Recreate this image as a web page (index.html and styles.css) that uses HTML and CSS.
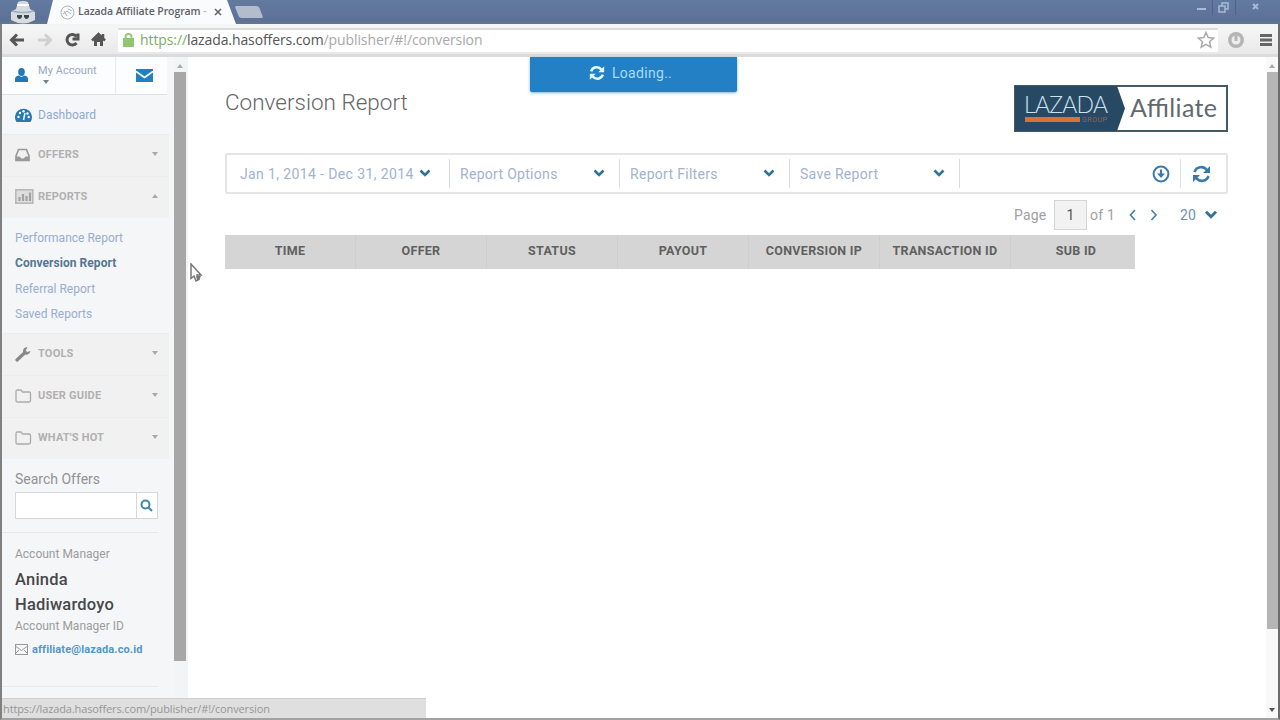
FILE: index.html
```html
<!DOCTYPE html>
<html lang="en">
<head>
    <meta charset="utf-8">
    <title>Lazada Affiliate Program</title>
    <link rel="stylesheet" href="styles.css">
</head>
<body>
<div class="window">
    <div class="tabstrip">
        <svg class="incognito" width="32" height="24" viewBox="0 0 32 24">
            <path d="M9 9L11 2Q16 0 21 2L23 9L28 12L28 20Q16 27 4 20L4 12Z" fill="#d5dbe1"/>
            <path d="M5 11Q16 14 27 11" stroke="#a5afbb" stroke-width="1.500" fill="none"/>
            <path d="M10 15h5v2q-1 2-2.500 2t-2.500-2zM17 15h5v2q-1 2-2.500 2t-2.500-2z" fill="#3e454d"/>
            <path d="M10 5h12" stroke="#fff" stroke-width="2"/>
        </svg>
        <div class="tab">
            <svg width="15" height="15" viewBox="0 0 15 15" fill="none" stroke="#b0b3b6">
                <circle cx="7.5" cy="7.5" r="6.5"/><path d="M3 9l4-3 4 3M8 4l4 2M4 6l3 5"/>
            </svg>
            <span class="tab-title">Lazada Affiliate Program <i>-</i></span>
            <svg class="tab-close" width="8" height="8" viewBox="0 0 8 8" stroke="#666" stroke-width="1.6"><path d="M1 1l6 6M7 1l-6 6"/></svg>
        </div>
        <div class="newtab"></div>
        <div class="controls">
            <svg width="76" height="22" viewBox="0 0 76 22" fill="none" stroke="#a9bad6" stroke-width="2">
                <path d="M5 12h9"/><path d="M27 9h6v6h-6zM30 9V6h6v6h-3" stroke-width="1.5"/><path d="M61 7l5 5M66 7l-5 5"/>
                <path d="M20.500 0v18M43.500 0v18" stroke="#4c628a" stroke-width="1"/>
            </svg>
        </div>
    </div>
    <div class="navbar">
        <svg class="nav-icons" width="118" height="26" viewBox="0 0 118 26" fill="none" stroke="#555" stroke-width="3">
            <path d="M22 13H10M15 7.500L9.500 13L15 18.500"/>
            <path d="M36 13h12M43 7.500L48.500 13L43 18.500" stroke="#d0d0d0"/>
            <path d="M74.500 9.500A5.300 5.300 0 1 0 74.500 16M76 6.500v5.500h-5.500"/>
            <path d="M90 13.500L96.500 7L103 13.500M101 7v4" stroke-width="2.500"/>
            <path d="M92 12.500l4.500-4 4.500 4V19h-3v-4h-3v4h-3z" fill="#555" stroke="none"/>
        </svg>
        <div class="address">
            <svg width="11" height="14" viewBox="0 0 11 14"><path d="M2.500 6V4a3 3 0 0 1 6 0v2" fill="none" stroke="#9ac67c" stroke-width="2"/><rect y="5" width="11" height="9" fill="#91c670"/></svg>
            <span class="url"><b>https://</b><em>lazada.hasoffers.com</em>/publisher/#!/conversion</span>
            <svg class="star" width="18" height="18" viewBox="0 0 18 18" fill="#fff" stroke="#aaa" stroke-width="1.500"><path d="M9 1.500l2.200 5.100 5.500.5-4.200 3.600 1.300 5.500L9 13.300l-4.800 2.900 1.300-5.500-4.200-3.600 5.500-.5z"/></svg>
        </div>
        <svg class="ext" width="18" height="18" viewBox="0 0 18 18"><circle cx="9" cy="9" r="8" fill="#b5b5b5"/><circle cx="9" cy="9" r="4.500" fill="#eee"/><path d="M9 3v7" stroke="#b5b5b5" stroke-width="3"/></svg>
        <svg class="menu" width="12" height="14" viewBox="0 0 12 14" stroke="#666" stroke-width="2.800"><path d="M0 2.500h12M0 7h12M0 11.500h12"/></svg>
    </div>
    <div class="page">
        <div class="sidebar">
            <div class="account">
                <div class="account-link">
                    <svg width="13" height="16" viewBox="0 0 13 16" fill="#2278b8"><ellipse cx="6.500" cy="5" rx="3.300" ry="4"/><path d="M0 15V12q0-3 3.500-3.500l3 1.500 3-1.500Q13 9 13 12v3z"/></svg>
                    <div><span class="my-account">My Account</span><i class="caret"></i></div>
                </div>
                <div class="mail">
                    <svg width="17" height="13" viewBox="0 0 17 13"><rect width="17" height="13" fill="#2180c0"/><path d="M0 2.500L8.500 8.500L17 2.500" fill="none" stroke="#fff" stroke-width="1.600"/></svg>
                </div>
            </div>
            <a class="dashboard">
                <svg width="17" height="14" viewBox="0 0 17 14"><path d="M1.500 14A8.500 8.500 0 1 1 15.500 14z" fill="#2679b2"/><path d="M8.500 12L10 5" stroke="#fff" stroke-width="1.500"/><g fill="#fff"><circle cx="3.500" cy="9" r="1.200"/><circle cx="5" cy="5" r="1.200"/><circle cx="8.500" cy="3.300" r="1.200"/><circle cx="12.500" cy="5.500" r="1.200"/><circle cx="13.700" cy="9" r="1.200"/></g></svg>
                <span>Dashboard</span>
            </a>
            <div class="group">
                <svg width="17" height="14" viewBox="0 0 17 14" fill="none" stroke="#999" stroke-width="1.600"><path d="M1 8L3.500 1.500h8L14 8v4.500H1z"/><path d="M1 9h3.500l1.500 2h3l1.500-2H14v3.500H1z" fill="#999" stroke-width="1"/></svg>
                <span>OFFERS</span><i class="caret"></i>
            </div>
            <div class="group">
                <svg class="chart" width="19" height="15" viewBox="0 0 19 15"><rect x=".8" y=".8" width="17" height="13.400" fill="#dedede" stroke="#b5b5b5" stroke-width="1.500"/><path d="M4.500 12V8M8 12V5M11.500 12V7M15 12V3.500" stroke="#a2a2a2" stroke-width="2.200"/></svg>
                <span>REPORTS</span><i class="caret up"></i>
            </div>
            <div class="submenu">
                <a>Performance Report</a>
                <a class="active">Conversion Report</a>
                <a>Referral Report</a>
                <a>Saved Reports</a>
            </div>
            <div class="group">
                <svg width="17" height="16" viewBox="0 0 17 16"><path d="M2 14L9.500 7" stroke="#888" stroke-width="3.200" stroke-linecap="round"/><path d="M12.500 1Q7.500 1.500 8 6q1 3.500 4.500 2.500Q15 8 15.500 5L12 6 10.800 4.500z" fill="#888"/></svg>
                <span>TOOLS</span><i class="caret"></i>
            </div>
            <div class="group">
                <svg width="17" height="14" viewBox="0 0 17 14" fill="none" stroke="#aaa" stroke-width="1.300"><path d="M1 11.500V2.500Q1 1 2.500 1H6l1.500 2H14q1.500 0 1.500 1.500v7Q15.500 13 14 13H2.500Q1 13 1 11.500z"/></svg>
                <span>USER GUIDE</span><i class="caret"></i>
            </div>
            <div class="group">
                <svg width="17" height="14" viewBox="0 0 17 14" fill="none" stroke="#aaa" stroke-width="1.300"><path d="M1 11.500V2.500Q1 1 2.500 1H6l1.500 2H14q1.500 0 1.500 1.500v7Q15.500 13 14 13H2.500Q1 13 1 11.500z"/></svg>
                <span>WHAT'S HOT</span><i class="caret"></i>
            </div>
            <div class="search">
                <label>Search Offers</label>
                <div class="search-box">
                    <div class="search-input"></div>
                    <div class="search-button"><svg width="13" height="13" viewBox="0 0 13 13" fill="none" stroke="#4384a8" stroke-width="2"><circle cx="5.500" cy="5.500" r="4"/><path d="M8.500 8.500L12 12"/></svg></div>
                </div>
            </div>
            <div class="manager">
                <div class="small">Account Manager</div>
                <div class="name">Aninda<br>Hadiwardoyo</div>
                <div class="small id">Account Manager ID</div>
                <div class="email"><svg width="13" height="11" viewBox="0 0 13 11" fill="none" stroke="#999"><rect x=".5" y=".5" width="12" height="10"/><path d="M1 2.500l5.500 4 5.500-4M1 9l3-3M12 9L9 6"/></svg><a>affiliate@lazada.co.id</a></div>
            </div>
        </div>
        <div class="scroll scroll-side"><i class="arrow"></i><div class="thumb"></div></div>
        <div class="content">
            <div class="heading">
                <h1>Conversion Report</h1>
                <svg class="logo" width="214" height="47" viewBox="0 0 214 47">
                    <rect x="1" y="1" width="212" height="45" fill="#fff" stroke="#455a68" stroke-width="2"/>
                    <path d="M1 1h102l8 22.500L103 46H1z" fill="#284963"/>
                    <text class="logo-name" x="10" y="28" textLength="84">LAZADA</text>
                    <rect x="11" y="32" width="55" height="5" fill="#d9713a"/>
                    <text class="logo-group" x="68" y="37" textLength="25">GROUP</text>
                    <text class="logo-aff" x="116" y="32" textLength="87">Affiliate</text>
                </svg>
            </div>
            <div class="filters">
                <div class="filter date"><span>Jan 1, 2014 - Dec 31, 2014</span><svg class="chev" width="12" height="9" viewBox="0 0 12 9"><path d="M1.500 1.500L6 6L10.500 1.500"/></svg></div>
                <div class="filter"><span>Report Options</span><svg class="chev" width="12" height="9" viewBox="0 0 12 9"><path d="M1.500 1.500L6 6L10.500 1.500"/></svg></div>
                <div class="filter"><span>Report Filters</span><svg class="chev" width="12" height="9" viewBox="0 0 12 9"><path d="M1.500 1.500L6 6L10.500 1.500"/></svg></div>
                <div class="filter"><span>Save Report</span><svg class="chev" width="12" height="9" viewBox="0 0 12 9"><path d="M1.500 1.500L6 6L10.500 1.500"/></svg></div>
                <div class="download"><svg width="18" height="18" viewBox="0 0 18 18" fill="none" stroke="#3b7aac" stroke-width="2"><circle cx="9" cy="9" r="7.400"/><path d="M9 4.500v6" stroke-width="2.200"/><path d="M5 8.500L9 13l4-4.500z" fill="#3b7aac" stroke="none"/></svg></div>
                <div class="refresh"><svg width="19" height="18" viewBox="0 0 19 18" fill="none" stroke="#3979b0" stroke-width="2.500"><path d="M2.500 7A7 7 0 0 1 14.800 5M16.500 11A7 7 0 0 1 4.200 13"/><path d="M18 1v7h-7zM1 17v-7h7z" fill="#3979b0" stroke="none"/></svg></div>
            </div>
            <div class="pager">
                <span class="page-label">Page</span>
                <span class="page-box">1</span>
                <span class="of">of 1</span>
                <svg class="steps" width="30" height="12" viewBox="0 0 30 12" fill="none" stroke="#4684ab" stroke-width="1.700"><path d="M6 1L1.500 6L6 11M22.500 1L27 6l-4.500 5"/></svg>
                <span class="per-page">20</span>
                <svg class="chev" width="14" height="10" viewBox="0 0 12 9"><path d="M1.500 1.500L6 6L10.500 1.500"/></svg>
            </div>
            <div class="table-head">
                <div>TIME</div><div>OFFER</div><div>STATUS</div><div>PAYOUT</div><div>CONVERSION IP</div><div>TRANSACTION ID</div><div>SUB ID</div>
            </div>
        </div>
        <div class="scroll scroll-main"><i class="arrow"></i><div class="thumb"></div><i class="arrow down"></i></div>
    </div>
    <div class="loading">
        <svg width="16" height="16" viewBox="0 0 19 18" fill="none" stroke="#e2faff" stroke-width="3"><path d="M2.500 7A7 7 0 0 1 14.800 5M16.500 11A7 7 0 0 1 4.200 13"/><path d="M18 1v7h-7zM1 17v-7h7z" fill="#e2faff" stroke="none"/></svg>
        <span>Loading..</span>
    </div>
    <div class="status">https://lazada.hasoffers.com/publisher/#!/conversion</div>
    <svg class="cursor" width="14" height="20" viewBox="0 0 14 20"><path d="M2 1v14.500l3-2.500 2 5 3-1.500-2-4.500h4z" fill="#fff" stroke="#777" stroke-width="1.500"/><path d="M7 13l5 0-2 4-2 0z" fill="#777"/></svg>
</div>
</body>
</html>
```
FILE: styles.css
```css
* {
    box-sizing: border-box;
}

body {
    margin: 0;
    font-family: Roboto, sans-serif;
    background-color: #fff;
    overflow: hidden;
}

svg {
    display: block;
    flex: none;
}

.window {
    position: relative;
    display: flex;
    flex-direction: column;
    width: 1280px;
    height: 720px;
    border-left: 2px solid #808080;
    border-right: 2px solid #6c6c6c;
    border-bottom: 2px solid #a2a2a2;
}

/* browser chrome */
.tabstrip {
    display: flex;
    flex: none;
    height: 24px;
    margin: 0 -2px;
    background: linear-gradient(#637a9f, #5c7198 85%, #687788);
}

.incognito {
    margin-left: 7px;
}

.tab {
    display: flex;
    align-items: center;
    width: 189px;
    height: 24px;
    margin-left: 8px;
    padding-left: 13px;
    background-color: #fafbfc;
    clip-path: polygon(6px 0, 180px 0, 189px 100%, 0 100%);
}

.tab-title {
    width: 136px;
    margin: -2px 0 0 3px;
    font-family: "Open Sans", sans-serif;
    font-size: 10.5px;
    font-weight: 600;
    letter-spacing: -0.08px;
    color: #5d6167;
    white-space: nowrap;
}

.tab-title i {
    color: #bbb;
}

.newtab {
    width: 24px;
    height: 12px;
    margin: 6px 0 0 1px;
    background-color: #b1bccd;
    transform: skewX(22deg);
    border-radius: 2px;
}

.controls {
    margin: -3px 0 0 auto;
    padding-right: 12px;
}

.navbar {
    display: flex;
    flex: none;
    align-items: center;
    height: 33px;
    border-top: 2px solid #f2f5f6;
    border-bottom: 3px solid #dddada;
    background: linear-gradient(#f6f6f6, #e9e9e9);
}

.nav-icons {
    margin-right: -2px;
}

.address {
    display: flex;
    align-items: center;
    width: 1100px;
    height: 24px;
    margin-bottom: 1px;
    padding: 0 0 2px 5px;
    border-top: 2px solid #dcdcdc;
    background-color: #fff;
}

.url {
    margin-left: 6px;
    font-family: "Open Sans", sans-serif;
    font-size: 14px;
    letter-spacing: -0.1px;
    color: #a8a8a8;
}

.url b {
    font-weight: 400;
    color: #79b05f;
}

.url em {
    font-style: normal;
    color: #555;
}

.star {
    margin-left: auto;
    margin-right: 3px;
}

.ext {
    margin-left: 9px;
}

.menu {
    margin-left: 15px;
}

.page {
    display: flex;
    flex: 1;
    min-height: 0;
}

/* sidebar */
.sidebar {
    width: 172px;
    background-color: #f5f6f8;
    overflow: hidden;
}

.account {
    display: flex;
    width: 165px;
    height: 38px;
    background-color: #fcfdfe;
    border-bottom: 1px solid #dfe1e3;
}

.account-link {
    display: flex;
    width: 114px;
    padding: 10px 0 0 13px;
    border-right: 1px solid #e7e9eb;
}

.account-link > div {
    margin: -4px 0 0 10px;
}

.my-account {
    display: block;
    font-size: 11px;
    line-height: 16px;
    letter-spacing: 0.05px;
    color: #9aa8c1;
}

.mail {
    padding: 12px 0 0 20px;
}

.caret {
    display: block;
    width: 0;
    border: 3px solid transparent;
    border-top: 4px solid #a8a8a8;
    border-bottom: 0;
}

.caret.up {
    border-top: 0;
    border-bottom: 4px solid #a8a8a8;
}

.account .caret {
    margin: 1px 0 0 5px;
    border-top-color: #74808f;
}

.dashboard {
    display: flex;
    align-items: center;
    height: 39px;
    padding-left: 13px;
    font-size: 12px;
    color: #8eabd0;
}

.dashboard span {
    margin-left: 6px;
}

.group {
    display: flex;
    align-items: center;
    width: 167px;
    height: 42px;
    padding: 0 8px 2px 13px;
    border-top: 1px solid #ececed;
    background-color: #f1f1f2;
    font-size: 11px;
    font-weight: 700;
    letter-spacing: 0.2px;
    color: #b0b0b0;
}

.group svg {
    margin-right: 6px;
}

.group .chart {
    margin-right: 4px;
}

.group .caret {
    margin: -1px 3px 0 auto;
}

.submenu {
    height: 115px;
    padding: 7px 0 0 13px;
    font-size: 12px;
    color: #98adcf;
}

.submenu a {
    display: block;
    width: max-content;
    height: 25.4px;
    line-height: 26px;
}

.submenu .active {
    font-weight: 700;
    letter-spacing: 0.05px;
    color: #557792;
}

.search {
    width: 156px;
    height: 74px;
    margin-bottom: 10px;
    padding: 11px 0 0 13px;
    border-bottom: 1px solid #e7e8ea;
}

.search label {
    display: block;
    font-size: 14px;
    line-height: 19px;
    color: #929292;
}

.search-box {
    display: flex;
    height: 27px;
    margin-top: 3px;
    border: 1px solid #d5d7d9;
    background-color: #fff;
}

.search-input {
    width: 121px;
    border-right: 1px solid #d5d7d9;
}

.search-button {
    flex: 1;
    padding: 6px 0 0 3px;
}

.manager {
    width: 156px;
    height: 144px;
    padding: 0 0 0 13px;
    border-bottom: 1px solid #e8e9eb;
}

.small {
    font-size: 12px;
    line-height: 22px;
    color: #9c9c9c;
}

.small.id {
    line-height: 18px;
}

.name {
    padding-top: 2px;
    font-size: 16.5px;
    font-weight: 500;
    letter-spacing: 0.2px;
    line-height: 25px;
    color: #484848;
}

.email {
    display: flex;
    align-items: center;
    height: 28px;
    font-size: 11px;
    font-weight: 700;
    letter-spacing: 0.13px;
    color: #5596c5;
}

.email a {
    margin-left: 4px;
}

/* scrollbars */
.scroll {
    flex: none;
    width: 14px;
    padding: 7px 2px 0 0;
    background-color: #f3f4f6;
}

.arrow {
    display: block;
    width: 0;
    margin: 0 auto 4px;
    border: 3px solid transparent;
    border-top: 0;
    border-bottom: 4px solid #aaa;
}

.arrow.down {
    margin-top: 79px;
    border-bottom: 0;
    border-top: 4px solid #555;
}

.thumb {
    height: 589px;
    background-color: #a7a7a7;
}

.scroll-main {
    width: 12px;
    margin-left: auto;
    padding-right: 0;
    background-color: #f9f9f9;
}

.scroll-main .thumb {
    height: 557px;
    margin-left: 1px;
    background-color: #b5b5b5;
}

/* report */
.content {
    width: 1040px;
    padding: 28px 0 0 37px;
}

.heading {
    display: flex;
    justify-content: space-between;
    width: 1003px;
    height: 68px;
}

h1 {
    margin: 0;
    font-size: 22.5px;
    font-weight: 300;
    line-height: 35px;
    color: #666;
}

.logo-name {
    font-family: Lato, sans-serif;
    font-size: 23px;
    font-weight: 300;
    fill: #c8e4f2;
}

.logo-group {
    font-size: 7px;
    fill: #8c6a5a;
}

.logo-aff {
    font-family: Lato, sans-serif;
    font-size: 25px;
    fill: #626870;
}

.filters {
    display: flex;
    align-items: center;
    width: 1003px;
    height: 41px;
    border: 2px solid #e5e5e5;
    border-radius: 2px;
    background-color: #fff;
}

.filter {
    display: flex;
    align-items: center;
    justify-content: space-between;
    width: 170px;
    height: 29px;
    padding: 0 14px 0 10px;
    border-right: 1px solid #d9dbdf;
    font-size: 14px;
    letter-spacing: 0.3px;
    color: #a3b2cf;
}

.filter.date {
    width: 223px;
    padding: 0 18px 0 13px;
    letter-spacing: 0.38px;
}

.chev {
    fill: none;
    stroke: #2f7399;
    stroke-width: 2.6;
}

.download {
    display: flex;
    align-items: center;
    width: 221px;
    height: 29px;
    padding-left: 192px;
    border-right: 1px solid #dcdfe4;
}

.refresh {
    margin-left: 11px;
}

.pager {
    display: flex;
    align-items: center;
    width: 1003px;
    height: 41px;
    padding-left: 789px;
    font-size: 14px;
    letter-spacing: 0.2px;
    color: #a0a0a0;
}

.page-box {
    width: 33px;
    height: 30px;
    margin: 0 3px 0 7px;
    border: 1px solid #d5d5d5;
    background-color: #f2f2f2;
    line-height: 28px;
    text-align: center;
    color: #555;
}

.page-label {
    width: 33px;
}

.of {
    width: 25px;
    white-space: nowrap;
}

.steps {
    margin-left: 14px;
}

.per-page {
    margin: 0 8px 0 21px;
    color: #6d93b2;
}

.table-head {
    display: grid;
    grid-template-columns: 131px 131px 131px 131px 131px 131px 124px;
    width: 910px;
    height: 34px;
    background-color: #d5d5d5;
    font-size: 12.5px;
    font-weight: 700;
    letter-spacing: 0.3px;
    line-height: 31px;
    text-align: center;
    white-space: nowrap;
    color: #606060;
}

.table-head div {
    border-right: 1px solid #cecece;
}

.table-head div:last-child {
    border-right: 0;
    padding-left: 6px;
}

/* overlays */
.loading {
    position: absolute;
    top: 57px;
    left: 528px;
    display: flex;
    align-items: center;
    width: 207px;
    height: 35px;
    padding: 0 0 3px 59px;
    border-radius: 0 0 2px 2px;
    background-color: #2380c5;
    box-shadow: 0 1px 3px #7cb3d8;
    font-size: 14px;
    letter-spacing: 0.3px;
    color: #a7dcfa;
}

.loading span {
    margin-left: 7px;
}

.status {
    position: absolute;
    bottom: 0;
    left: 0;
    width: 424px;
    height: 20px;
    padding-left: 1px;
    border-top: 1px solid #d0d0d0;
    background-color: #dfdfdf;
    font-family: "Open Sans", sans-serif;
    font-size: 11px;
    letter-spacing: -0.12px;
    line-height: 19px;
    color: #969696;
}

.cursor {
    position: absolute;
    top: 263px;
    left: 187px;
}
```
